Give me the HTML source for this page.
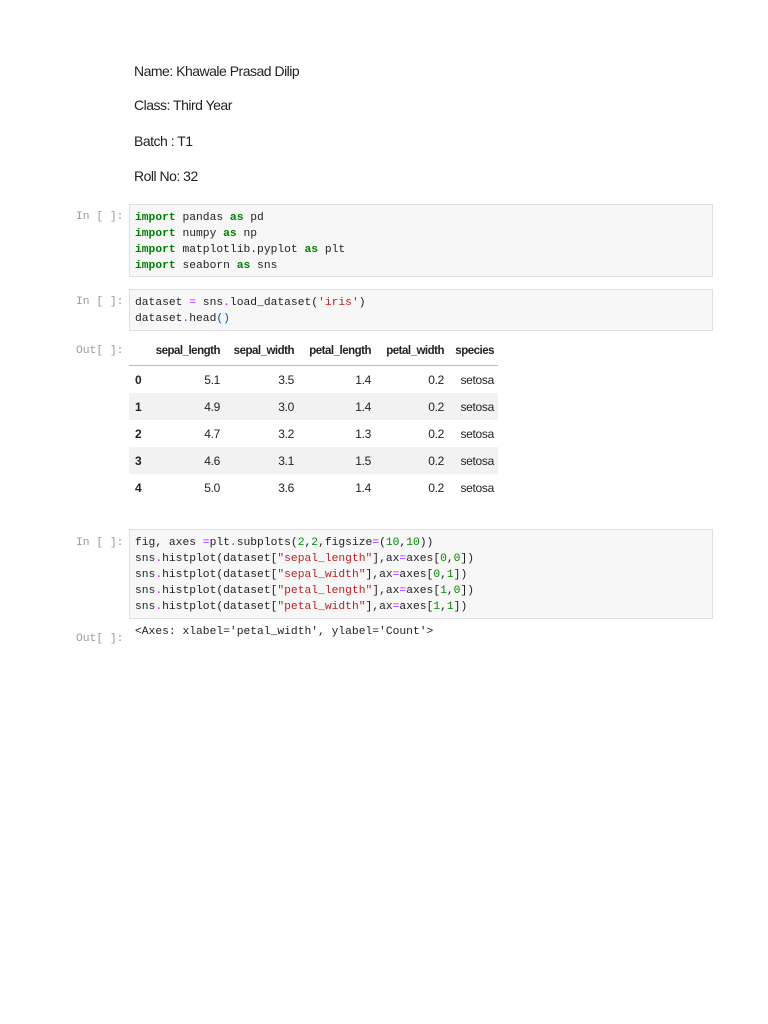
<!DOCTYPE html>
<html><head><meta charset="utf-8"><style>
body{margin:0;width:768px;height:1024px;background:#fff;position:relative;overflow:hidden;font-family:"Liberation Sans",sans-serif}
.t{position:absolute;left:134px;font-size:14px;color:#222;letter-spacing:-0.5px}
.p{position:absolute;font-family:"Liberation Mono",monospace;font-size:11.3px;color:#999;left:76px}
.c{position:absolute;left:129px;width:584px;background:#f7f7f7;border:1px solid #dfdfdf;font-family:"Liberation Mono",monospace;font-size:11.3px;line-height:16px;color:#222;padding:5px 5px;box-sizing:border-box;white-space:pre}
.k{color:#008000;font-weight:bold}.o{color:#a2f}.s{color:#b22}.n{color:#080}.b{color:#05a}
table{position:absolute;left:129px;top:337px;border-collapse:collapse;font-size:12px;color:#222;width:369px;table-layout:fixed;letter-spacing:-0.3px}
th{font-weight:bold;text-align:right;height:28px;padding:0 4px;border-bottom:1px solid #bbb;font-size:11.5px;letter-spacing:-0.5px;white-space:nowrap}
td{height:27px;text-align:right;padding:0 4px}
td:first-child{text-align:left;font-weight:bold;padding-left:6px}
tr.g{background:#f2f2f2}
</style></head><body>
<div class="t" style="top:63px">Name: Khawale Prasad Dilip</div>
<div class="t" style="top:97px">Class: Third Year</div>
<div class="t" style="top:133px">Batch : T1</div>
<div class="t" style="top:168px">Roll No: 32</div>
<div class="p" style="top:211px">In [ ]:</div>
<div class="c" style="top:204px;height:73px"><span class="k">import</span> pandas <span class="k">as</span> pd
<span class="k">import</span> numpy <span class="k">as</span> np
<span class="k">import</span> matplotlib.pyplot <span class="k">as</span> plt
<span class="k">import</span> seaborn <span class="k">as</span> sns</div>
<div class="p" style="top:296px">In [ ]:</div>
<div class="c" style="top:289px;height:42px">dataset <span class="o">=</span> sns<span class="o">.</span>load_dataset(<span class="s">'iris'</span>)
dataset<span class="o">.</span>head<span class="b">()</span></div>
<div class="p" style="top:345px">Out[ ]:</div>
<table>
<colgroup><col style="width:19px"><col style="width:76px"><col style="width:74px"><col style="width:77px"><col style="width:73px"><col style="width:50px"></colgroup>
<tr><th></th><th>sepal_length</th><th>sepal_width</th><th>petal_length</th><th>petal_width</th><th>species</th></tr>
<tr><td>0</td><td>5.1</td><td>3.5</td><td>1.4</td><td>0.2</td><td>setosa</td></tr>
<tr class="g"><td>1</td><td>4.9</td><td>3.0</td><td>1.4</td><td>0.2</td><td>setosa</td></tr>
<tr><td>2</td><td>4.7</td><td>3.2</td><td>1.3</td><td>0.2</td><td>setosa</td></tr>
<tr class="g"><td>3</td><td>4.6</td><td>3.1</td><td>1.5</td><td>0.2</td><td>setosa</td></tr>
<tr><td>4</td><td>5.0</td><td>3.6</td><td>1.4</td><td>0.2</td><td>setosa</td></tr>
</table>
<div class="p" style="top:537px">In [ ]:</div>
<div class="c" style="top:529px;height:90px">fig, axes <span class="o">=</span>plt<span class="o">.</span>subplots(<span class="n">2</span>,<span class="n">2</span>,figsize<span class="o">=</span>(<span class="n">10</span>,<span class="n">10</span>))
sns<span class="o">.</span>histplot(dataset[<span class="s">"sepal_length"</span>],ax<span class="o">=</span>axes[<span class="n">0</span>,<span class="n">0</span>])
sns<span class="o">.</span>histplot(dataset[<span class="s">"sepal_width"</span>],ax<span class="o">=</span>axes[<span class="n">0</span>,<span class="n">1</span>])
sns<span class="o">.</span>histplot(dataset[<span class="s">"petal_length"</span>],ax<span class="o">=</span>axes[<span class="n">1</span>,<span class="n">0</span>])
sns<span class="o">.</span>histplot(dataset[<span class="s">"petal_width"</span>],ax<span class="o">=</span>axes[<span class="n">1</span>,<span class="n">1</span>])</div>
<div class="p" style="top:633px">Out[ ]:</div>
<div style="position:absolute;left:135px;top:626px;font-family:'Liberation Mono',monospace;font-size:11.3px;color:#222">&lt;Axes: xlabel='petal_width', ylabel='Count'&gt;</div>
</body></html>
